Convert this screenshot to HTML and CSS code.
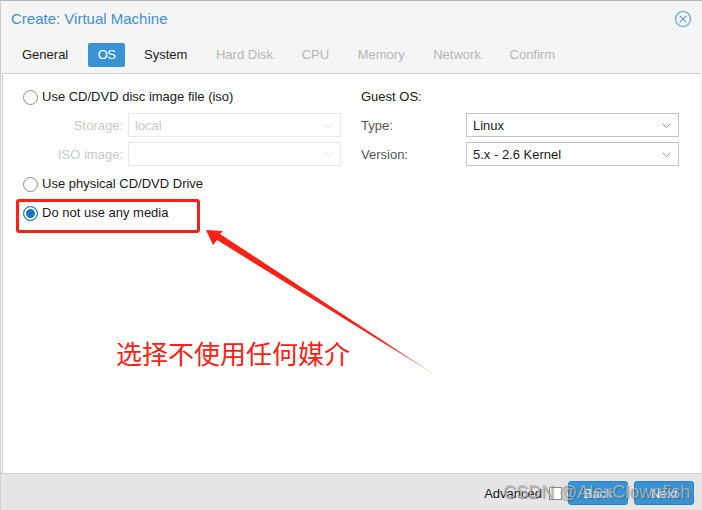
FILE: index.html
```html
<!DOCTYPE html>
<html lang="en">
<head>
    <meta charset="UTF-8">
    <meta name="viewport" content="width=device-width, initial-scale=1.0">
    <title>Create: Virtual Machine</title>
    <link rel="stylesheet" href="styles.css">
</head>
<body>
    <div class="window">
        <div class="header">
            <span class="title">Create: Virtual Machine</span>
            <svg class="close" width="18" height="18" viewBox="0 0 18 18">
                <circle cx="9" cy="9" r="7.5" fill="none" stroke="#5b9bd5" stroke-width="1.1"/>
                <path d="M5.6 5.6 L12.4 12.4 M12.4 5.6 L5.6 12.4" stroke="#5b9bd5" stroke-width="1.1"/>
            </svg>
        </div>

        <div class="tabs">
            <span class="tab">General</span>
            <span class="tab active">OS</span>
            <span class="tab">System</span>
            <span class="tab disabled">Hard Disk</span>
            <span class="tab disabled">CPU</span>
            <span class="tab disabled">Memory</span>
            <span class="tab disabled">Network</span>
            <span class="tab disabled">Confirm</span>
        </div>

        <div class="panel">
            <div class="col-left">
                <div class="radio-row">
                    <span class="radio"></span>
                    <span>Use CD/DVD disc image file (iso)</span>
                </div>
                <div class="field-row">
                    <label class="field-label disabled-text">Storage:</label>
                    <div class="select select-disabled">
                        <span>local</span>
                        <svg class="chevron" width="9" height="5" viewBox="0 0 9 5"><path d="M0.5 0.5 L4.5 4.5 L8.5 0.5" fill="none" stroke="#e2e2e2"/></svg>
                    </div>
                </div>
                <div class="field-row">
                    <label class="field-label disabled-text">ISO image:</label>
                    <div class="select select-disabled">
                        <span></span>
                        <svg class="chevron" width="9" height="5" viewBox="0 0 9 5"><path d="M0.5 0.5 L4.5 4.5 L8.5 0.5" fill="none" stroke="#e2e2e2"/></svg>
                    </div>
                </div>
                <div class="radio-row">
                    <span class="radio"></span>
                    <span>Use physical CD/DVD Drive</span>
                </div>
                <div class="radio-row">
                    <span class="radio checked"></span>
                    <span>Do not use any media</span>
                </div>
            </div>
            <div class="col-right">
                <div class="guest-title">Guest OS:</div>
                <div class="field-row">
                    <label class="guest-label">Type:</label>
                    <div class="select">
                        <span>Linux</span>
                        <svg class="chevron" width="9" height="5" viewBox="0 0 9 5"><path d="M0.5 0.5 L4.5 4.5 L8.5 0.5" fill="none" stroke="#9a9a9a"/></svg>
                    </div>
                </div>
                <div class="field-row">
                    <label class="guest-label">Version:</label>
                    <div class="select">
                        <span>5.x - 2.6 Kernel</span>
                        <svg class="chevron" width="9" height="5" viewBox="0 0 9 5"><path d="M0.5 0.5 L4.5 4.5 L8.5 0.5" fill="none" stroke="#9a9a9a"/></svg>
                    </div>
                </div>
            </div>
        </div>

        <div class="footer">
            <span class="advanced">Advanced</span>
            <span class="checkbox"></span>
            <button class="btn btn-back">Back</button>
            <button class="btn btn-next">Next</button>
        </div>
    </div>

    <!-- annotations drawn on top of the screenshot -->
    <div class="mark-box"></div>
    <svg class="mark-arrow" width="702" height="510" viewBox="0 0 702 510">
        <defs>
            <linearGradient id="fade" gradientUnits="userSpaceOnUse" x1="385" y1="342" x2="440" y2="378">
                <stop offset="0" stop-color="#fb2116"/>
                <stop offset="1" stop-color="#fb2116" stop-opacity="0.2"/>
            </linearGradient>
        </defs>
        <polygon points="206,230 223,231 220,234 440,378 217,240 213,245" fill="url(#fade)"/>
    </svg>
    <div class="mark-text">选择不使用任何媒介</div>
    <div class="watermark">CSDN @AlexClownfish</div>
</body>
</html>
```

FILE: styles.css
```css
html, body {
    margin: 0;
    padding: 0;
}
body {
    position: relative;
    width: 702px;
    height: 510px;
    overflow: hidden;
    font-family: "Liberation Sans", Arial, sans-serif;
    font-size: 13px;
    background-color: #fff;
}
.window {
    box-sizing: border-box;
    height: 510px;
    display: flex;
    flex-direction: column;
    background-color: #f5f5f5;
    border-top: 1px solid #b5b5b5;
    border-left: 1px solid #cfcfcf;
}
.header {
    height: 35px;
    display: flex;
    align-items: center;
    justify-content: space-between;
    padding: 0 10px;
    flex-shrink: 0;
}
.title {
    font-size: 15px;
    color: #3f8fd0;
}
.tabs {
    height: 37px;
    display: flex;
    align-items: flex-start;
    gap: 8.6px;
    padding: 7px 0 0 11px;
    box-sizing: border-box;
    flex-shrink: 0;
}
.tab {
    height: 24px;
    line-height: 24px;
    padding: 0 10px;
    color: #1a1a1a;
}
.tab.active {
    margin-left: 1px;
    background-color: #3892d4;
    color: #fff;
    border-radius: 2px;
    letter-spacing: -0.6px;
}
.tab.disabled {
    color: #b5b5b5;
}
.panel {
    flex: 1;
    display: flex;
    background-color: #fff;
    border-top: 1px solid #cfcfcf;
    border-left: 1px solid #cfcfcf;
    margin: 0 2px 0 1px;
    padding: 10px 0 0 20px;
}
.col-left {
    width: 318px;
}
.col-right {
    margin-left: 20px;
}
.radio-row {
    height: 29px;
    display: flex;
    align-items: flex-start;
    gap: 4px;
    line-height: 26px;
    color: #1a1a1a;
}
.radio {
    box-sizing: border-box;
    width: 15px;
    height: 15px;
    margin-top: 6px;
    border: 1px solid #8a8a8a;
    border-radius: 50%;
    background-color: #fff;
}
.radio.checked {
    border-color: #1976c8;
    background-color: #1976c8;
    box-shadow: inset 0 0 0 2px #fff;
}
.field-row {
    height: 29px;
    display: flex;
    align-items: flex-start;
}
.field-label {
    width: 100px;
    text-align: right;
    line-height: 26px;
    margin-right: 5px;
}
.disabled-text {
    color: #c8c8c8;
}
.select {
    box-sizing: border-box;
    width: 213px;
    height: 24px;
    display: flex;
    align-items: center;
    justify-content: space-between;
    border: 1px solid #c4c4c4;
    padding: 0 7px 0 6px;
    color: #1a1a1a;
    background-color: #fff;
}
.select-disabled {
    border-color: #e8e8e8;
    color: #c8c8c8;
}
.guest-title {
    height: 29px;
    line-height: 26px;
    color: #1a1a1a;
}
.guest-label {
    width: 105px;
    line-height: 26px;
    color: #555;
}
.footer {
    height: 37px;
    flex-shrink: 0;
    display: flex;
    align-items: center;
    justify-content: flex-end;
    box-sizing: border-box;
    background-color: #e6e6e6;
    border-top: 1px solid #cfcfcf;
    padding: 2px 8px 0 0;
}
.advanced {
    color: #1a1a1a;
    margin-right: 7px;
}
.checkbox {
    box-sizing: border-box;
    width: 13px;
    height: 13px;
    border: 1px solid #8a8a8a;
    background-color: #fff;
    margin-right: 6px;
}
.btn {
    width: 60px;
    height: 24px;
    border: 1px solid #2f82c2;
    border-radius: 3px;
    background-color: #3892d4;
    color: #fff;
    font-family: inherit;
    font-size: 13px;
    padding: 0;
}
.btn-next {
    margin-left: 6px;
}
.mark-box {
    position: absolute;
    left: 16px;
    top: 199px;
    width: 184px;
    height: 34px;
    box-sizing: border-box;
    border: 3px solid #fb2116;
    border-radius: 3px;
}
.mark-arrow {
    position: absolute;
    left: 0;
    top: 0;
}
.mark-text {
    position: absolute;
    left: 116px;
    top: 338px;
    font-family: "Noto Sans CJK SC", sans-serif;
    font-size: 26px;
    line-height: 30px;
    color: #fb2116;
    white-space: nowrap;
}
.watermark {
    position: absolute;
    left: 503px;
    top: 482px;
    font-size: 18px;
    line-height: 20px;
    color: rgba(190, 190, 190, 0.8);
    text-shadow: 1px 1px 1px rgba(60, 60, 60, 0.5);
    white-space: nowrap;
}
```
